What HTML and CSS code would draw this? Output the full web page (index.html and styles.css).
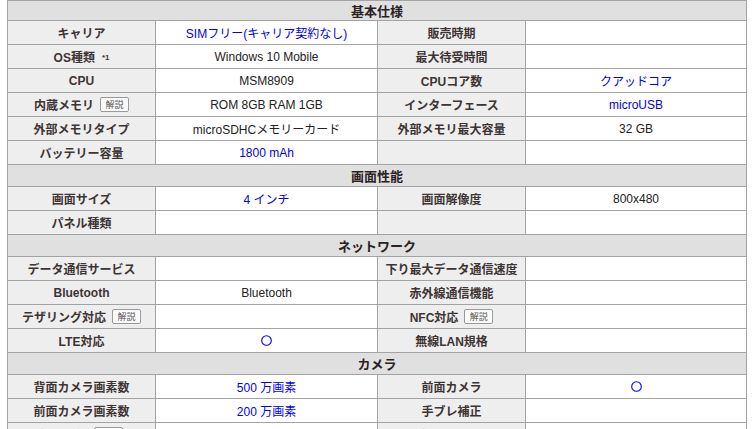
FILE: index.html
```html
<!DOCTYPE html>
<html lang="ja">
<head>
<meta charset="utf-8">
<title>基本仕様</title>
<link rel="stylesheet" href="styles.css">
</head>
<body>
<div class="wrap">
  <div class="spec">
    <div class="sec first">基本仕様</div>

    <div class="lab">キャリア</div><div class="val blue">SIMフリー(キャリア契約なし)</div>
    <div class="lab">販売時期</div><div class="val"></div>

    <div class="lab">OS種類<span class="note">*1</span></div><div class="val">Windows 10 Mobile</div>
    <div class="lab">最大待受時間</div><div class="val"></div>

    <div class="lab">CPU</div><div class="val">MSM8909</div>
    <div class="lab">CPUコア数</div><div class="val blue">クアッドコア</div>

    <div class="lab">内蔵メモリ<span class="badge">解説</span></div><div class="val">ROM 8GB RAM 1GB</div>
    <div class="lab">インターフェース</div><div class="val blue">microUSB</div>

    <div class="lab">外部メモリタイプ</div><div class="val">microSDHCメモリーカード</div>
    <div class="lab">外部メモリ最大容量</div><div class="val">32 GB</div>

    <div class="lab">バッテリー容量</div><div class="val blue">1800 mAh</div>
    <div class="lab"></div><div class="val"></div>

    <div class="sec">画面性能</div>

    <div class="lab">画面サイズ</div><div class="val blue">4 インチ</div>
    <div class="lab">画面解像度</div><div class="val">800x480</div>

    <div class="lab">パネル種類</div><div class="val"></div>
    <div class="lab"></div><div class="val"></div>

    <div class="sec">ネットワーク</div>

    <div class="lab">データ通信サービス</div><div class="val"></div>
    <div class="lab">下り最大データ通信速度</div><div class="val"></div>

    <div class="lab">Bluetooth</div><div class="val">Bluetooth</div>
    <div class="lab">赤外線通信機能</div><div class="val"></div>

    <div class="lab">テザリング対応<span class="badge">解説</span></div><div class="val"></div>
    <div class="lab">NFC対応<span class="badge">解説</span></div><div class="val"></div>

    <div class="lab">LTE対応</div><div class="val"><svg class="maru" width="11" height="11" viewBox="0 0 11 11"><circle cx="5.5" cy="5.5" r="4.8" fill="none" stroke="#0000ee" stroke-width="1.1"/></svg></div>
    <div class="lab">無線LAN規格</div><div class="val"></div>

    <div class="sec">カメラ</div>

    <div class="lab">背面カメラ画素数</div><div class="val blue">500 万画素</div>
    <div class="lab">前面カメラ</div><div class="val"><svg class="maru" width="11" height="11" viewBox="0 0 11 11"><circle cx="5.5" cy="5.5" r="4.8" fill="none" stroke="#0000ee" stroke-width="1.1"/></svg></div>

    <div class="lab">前面カメラ画素数</div><div class="val blue">200 万画素</div>
    <div class="lab">手ブレ補正</div><div class="val"></div>

    <div class="lab">撮影機能<span class="badge">解説</span></div><div class="val"></div>
    <div class="lab">撮影モード</div><div class="val"></div>
  </div>
</div>
</body>
</html>
```

FILE: styles.css
```css
html, body {
  margin: 0;
  padding: 0;
  background: #ffffff;
}
body {
  font-family: "Liberation Sans", "Noto Sans CJK JP", sans-serif;
  font-size: 12px;
  color: #333333;
  overflow: hidden;
}
.wrap {
  padding-left: 7px;
}
.spec {
  display: grid;
  grid-template-columns: 147px 221px 147px 220px;
  gap: 1px;
  padding: 1px;
  width: 738px;
  background: #a3a3a3;
}
.sec {
  grid-column: 1 / -1;
  height: 21px;
  background: #e0e0e0;
  display: flex;
  align-items: center;
  justify-content: center;
  font-weight: bold;
  font-size: 13px;
  color: #2a2222;
}
.sec.first {
  height: 19px;
}
.lab, .val {
  height: 23px;
  display: flex;
  align-items: center;
  justify-content: center;
  white-space: nowrap;
}
.lab {
  background: #eeeeee;
  font-weight: bold;
  color: #3d3434;
}
.val {
  background: #ffffff;
  color: #222222;
}
.val.blue {
  color: #0000ee;
}
.note {
  font-size: 8px;
  font-weight: bold;
  margin-left: 7px;
  position: relative;
  top: 1px;
}
.badge {
  display: inline-flex;
  align-items: center;
  justify-content: center;
  box-sizing: border-box;
  width: 29px;
  height: 15px;
  margin-left: 6px;
  border: 1px solid #9a9a9a;
  border-radius: 2px;
  background: #fafafa;
  font-size: 9px;
  font-weight: normal;
  color: #555555;
}
.maru {
  display: block;
}
```
